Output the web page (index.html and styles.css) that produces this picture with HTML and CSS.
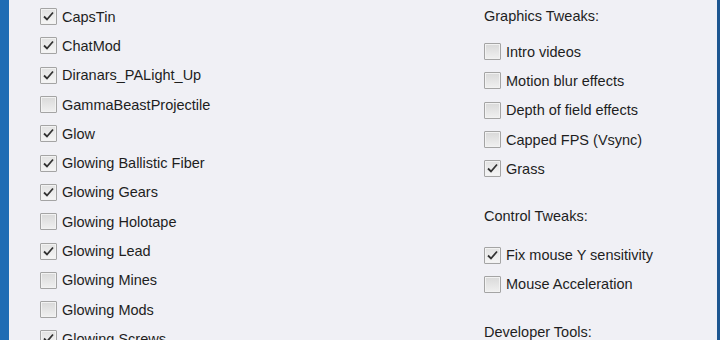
FILE: index.html
```html
<!DOCTYPE html>
<html lang="en">
<head>
    <meta charset="UTF-8">
    <title>Tweaks</title>
    <link rel="stylesheet" href="styles.css">
</head>
<body>
    <div class="window">
        <div class="mod-list">
            <label class="check-row"><span class="box checked"></span>CapsTin</label>
            <label class="check-row"><span class="box checked"></span>ChatMod</label>
            <label class="check-row"><span class="box checked"></span>Diranars_PALight_Up</label>
            <label class="check-row"><span class="box"></span>GammaBeastProjectile</label>
            <label class="check-row"><span class="box checked"></span>Glow</label>
            <label class="check-row"><span class="box checked"></span>Glowing Ballistic Fiber</label>
            <label class="check-row"><span class="box checked"></span>Glowing Gears</label>
            <label class="check-row"><span class="box"></span>Glowing Holotape</label>
            <label class="check-row"><span class="box checked"></span>Glowing Lead</label>
            <label class="check-row"><span class="box"></span>Glowing Mines</label>
            <label class="check-row"><span class="box"></span>Glowing Mods</label>
            <label class="check-row"><span class="box checked"></span>Glowing Screws</label>
        </div>

        <div class="tweaks">
            <div class="group-title">Graphics Tweaks:</div>
            <div class="group first">
                <label class="check-row"><span class="box"></span>Intro videos</label>
                <label class="check-row"><span class="box"></span>Motion blur effects</label>
                <label class="check-row"><span class="box"></span>Depth of field effects</label>
                <label class="check-row"><span class="box"></span>Capped FPS (Vsync)</label>
                <label class="check-row"><span class="box checked"></span>Grass</label>
            </div>

            <div class="group-title spaced">Control Tweaks:</div>
            <div class="group">
                <label class="check-row"><span class="box checked"></span>Fix mouse Y sensitivity</label>
                <label class="check-row"><span class="box"></span>Mouse Acceleration</label>
            </div>

            <div class="group-title spaced">Developer Tools:</div>
        </div>
    </div>
</body>
</html>
```

FILE: styles.css
```css
html, body {
    margin: 0;
    height: 100%;
    overflow: hidden;
}

body {
    font-family: "Liberation Sans", Arial, sans-serif;
    font-size: 14.5px;
    color: #1e1e1e;
    background-color: #f0f0f5;
}

.window {
    display: flex;
    height: 340px;
    box-sizing: border-box;
    border-left: 9px solid #1f6cb4;
    border-right: 3px solid #1d5690;
    background-color: #f0f0f5;
    overflow: hidden;
}

.mod-list {
    width: 442px;
    padding-left: 31px;
    padding-top: 2px;
    box-sizing: border-box;
}

.tweaks {
    padding-left: 33px;
    padding-top: 2px;
}

.check-row {
    display: flex;
    align-items: center;
    height: 29.3px;
    white-space: nowrap;
}

.box {
    width: 15px;
    height: 15px;
    margin-right: 5px;
    border: 1px solid #a4a4a4;
    border-radius: 1px;
    background: linear-gradient(#d9d9d9, #f0f0f0);
    box-shadow: inset 0 0 0 1px #f2f2f2;
    flex-shrink: 0;
}

.box.checked {
    background-color: #f4f4f4;
    background-image: url("data:image/svg+xml;utf8,<svg xmlns='http://www.w3.org/2000/svg' width='15' height='15' viewBox='0 0 15 15'><path d='M3 7.5 L6 10.5 L12 3.5' fill='none' stroke='%23333' stroke-width='1.8'/></svg>"), linear-gradient(#e2e2e2, #f6f6f6);
}

.group-title {
    height: 29px;
    line-height: 29px;
}

.group.first {
    margin-top: 6px;
}

.group-title.spaced {
    margin-top: 19px;
}

.group {
    margin-top: 9px;
}
```
